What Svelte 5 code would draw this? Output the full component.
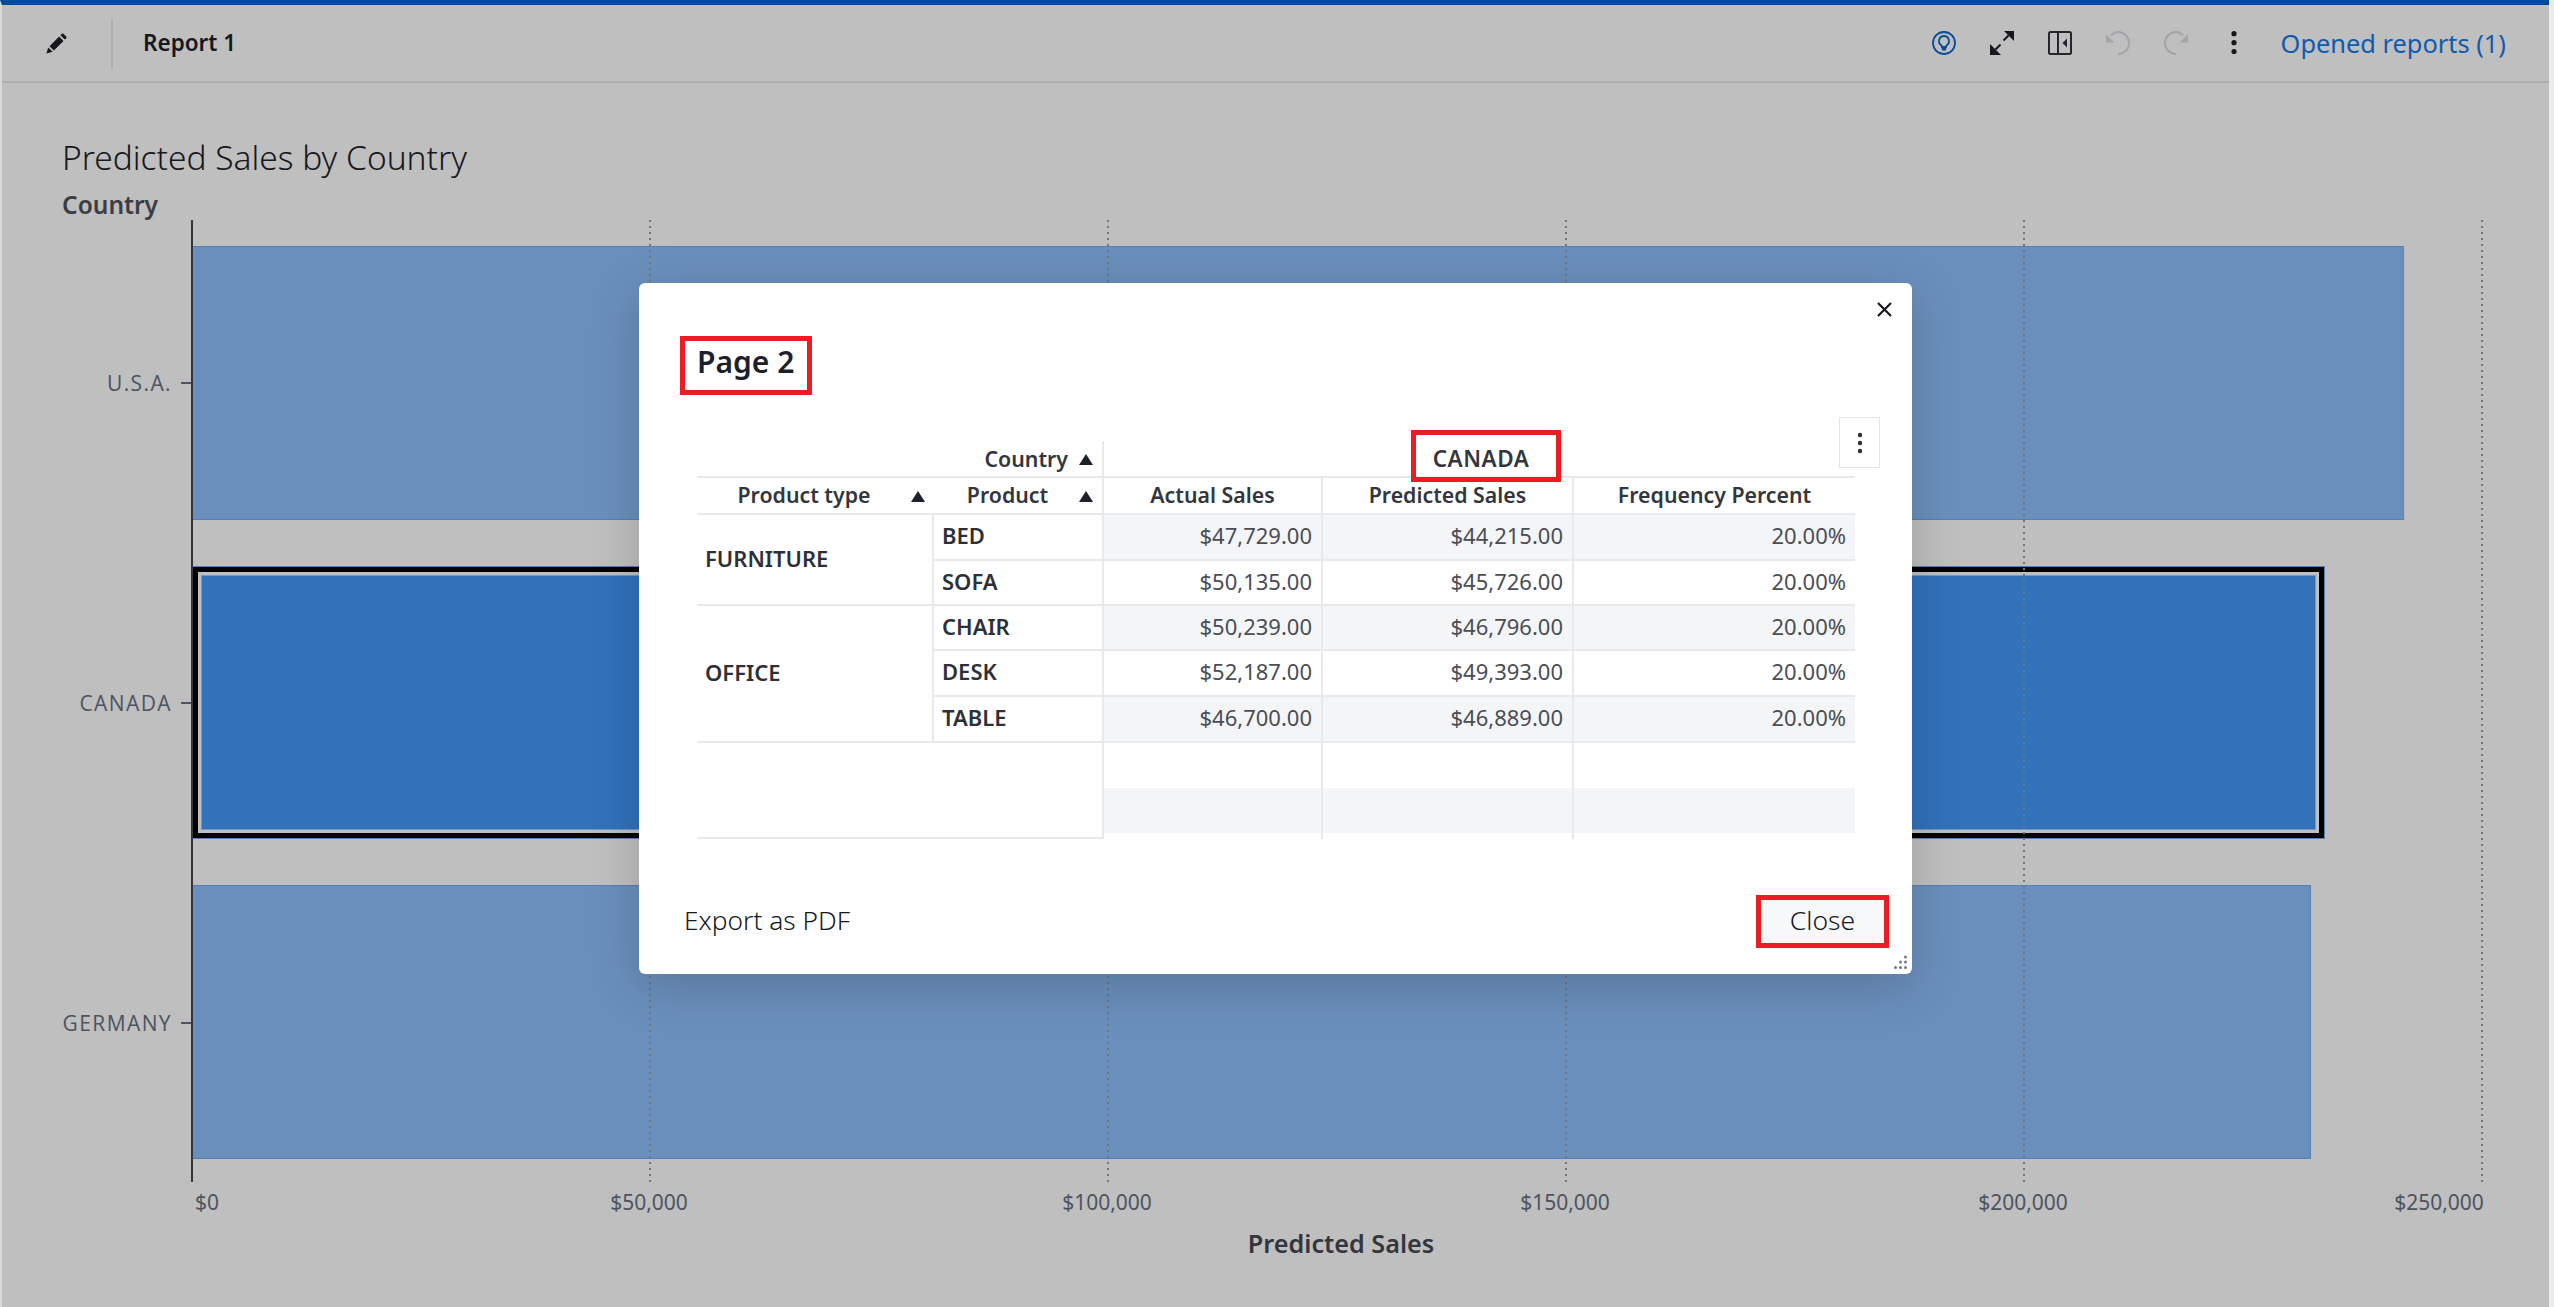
<script>
const bars = [
  { name: "U.S.A.", value: 241600 },
  { name: "CANADA", value: 233019, selected: true },
  { name: "GERMANY", value: 231440 },
];
const ticks = [0, 50000, 100000, 150000, 200000, 250000];
const pxPer = 458 / 50000;

function money(n) {
  return "$" + n.toLocaleString("en-US");
}

const groups = [
  {
    type: "FURNITURE",
    rows: [
      ["BED", "$47,729.00", "$44,215.00", "20.00%"],
      ["SOFA", "$50,135.00", "$45,726.00", "20.00%"],
    ],
  },
  {
    type: "OFFICE",
    rows: [
      ["CHAIR", "$50,239.00", "$46,796.00", "20.00%"],
      ["DESK", "$52,187.00", "$49,393.00", "20.00%"],
      ["TABLE", "$46,700.00", "$46,889.00", "20.00%"],
    ],
  },
];

function rowIndex(g, r) {
  let n = r;
  for (let i = 0; i < g; i++) n += groups[i].rows.length;
  return n;
}
</script>

<div class="shell">
  <header class="toolbar">
    <button class="edit" aria-label="Edit">
      <svg width="21" height="21" viewBox="0 0 24 24" fill="#16181d">
        <path d="M0.5 23.5l2-7 5 5z" />
        <path d="M4 15l11-11 5 5-11 11z" />
        <path d="M16.5 2.5l1.6-1.6a1.3 1.3 0 0 1 1.8 0l3.2 3.2a1.3 1.3 0 0 1 0 1.8l-1.6 1.6z" />
      </svg>
    </button>
    <div class="report-name">Report 1</div>
    <div class="actions">
      <svg class="icon" viewBox="0 0 24 24" fill="none" stroke="#0a4c98" stroke-width="1.8">
        <circle cx="12" cy="12" r="11" />
        <path d="M12 5a5 5 0 0 0-3 9c.7.6 1 1.3 1 2h4c0-.7.3-1.4 1-2a5 5 0 0 0-3-9z" />
        <rect x="9.8" y="15.2" width="4.4" height="4.3" rx="1" fill="#0a4c98" stroke="none" />
      </svg>
      <svg class="icon" viewBox="0 0 24 24" fill="#16181d">
        <path d="M24 0v10l-10-10z" />
        <path d="M0 24v-11l11 11z" />
        <path d="M18.5 4.5l-5 5M5.5 18.5l5-5" stroke="#16181d" stroke-width="2" />
      </svg>
      <svg class="icon" viewBox="0 0 24 24" fill="none" stroke="#24262c" stroke-width="2">
        <rect x="1" y="1" width="22" height="22" rx="1.5" />
        <path d="M10 1v22" />
        <path d="M14.5 12l4.5-4.5v9z" fill="#24262c" stroke="none" />
      </svg>
      <svg class="icon" viewBox="0 0 24 24" fill="none" stroke="#a2a5aa" stroke-width="2">
        <path d="M5 4.500C7 2 9.500 1 12 1a11 11 0 0 1 0 22" />
        <path d="M0 3.500v8h8.500z" fill="#a2a5aa" stroke="none" />
      </svg>
      <svg class="icon flip" viewBox="0 0 24 24" fill="none" stroke="#a2a5aa" stroke-width="2">
        <path d="M5 4.500C7 2 9.500 1 12 1a11 11 0 0 1 0 22" />
        <path d="M0 3.500v8h8.500z" fill="#a2a5aa" stroke="none" />
      </svg>
      <svg class="icon" viewBox="0 0 24 24" fill="#16181d">
        <circle cx="12" cy="2.700" r="2.600" />
        <circle cx="12" cy="11.700" r="2.600" />
        <circle cx="12" cy="20.500" r="2.600" />
      </svg>
      <span class="opened">Opened reports (1)</span>
    </div>
  </header>

  <h1 class="chart-title">Predicted Sales by Country</h1>
  <div class="axis-name">Country</div>

  <div class="chart">
    <div class="y-labels">
      {#each bars as b}
        <div class="y-label">{b.name}<i></i></div>
      {/each}
    </div>
    <div class="plot">
      {#each bars as b}
        <div class="bar" class:selected={b.selected} style="width: {b.value * pxPer - 2}px"></div>
      {/each}
      {#each ticks.slice(1) as t}
        <span class="gridline" style="left: {t * pxPer - 2}px"></span>
      {/each}
    </div>
  </div>

  <div class="x-ticks">
    {#each ticks as t}
      <span>{money(t)}</span>
    {/each}
  </div>
  <div class="x-title">Predicted Sales</div>

  <div class="modal">
    <button class="x" aria-label="Close dialog">
      <svg width="15" height="15" viewBox="0 0 15 15" stroke="#16181d" stroke-width="2.200">
        <path d="M1 1l13 13M14 1L1 14" />
      </svg>
    </button>
    <h2 class="page-title">Page 2</h2>

    <div class="table-wrap">
      <button class="more" aria-label="More">
        <svg width="6" height="22" viewBox="0 0 6 22" fill="#2d3038">
          <circle cx="3" cy="3" r="2.200" />
          <circle cx="3" cy="11" r="2.200" />
          <circle cx="3" cy="19" r="2.200" />
        </svg>
      </button>
      <table>
        <colgroup>
          <col class="c1" /><col class="c2" /><col class="c3" /><col class="c4" /><col class="c5" />
        </colgroup>
        <thead>
          <tr class="head1">
            <th colspan="2" class="country">Country <svg class="tri" viewBox="0 0 14 11"><path d="M7 0l7 11H0z" /></svg></th>
            <th colspan="3" class="canada"><span class="mark">CANADA</span></th>
          </tr>
          <tr class="head2">
            <th class="ptype">Product type <svg class="tri" viewBox="0 0 14 11"><path d="M7 0l7 11H0z" /></svg></th>
            <th class="pname edge">Product <svg class="tri" viewBox="0 0 14 11"><path d="M7 0l7 11H0z" /></svg></th>
            <th class="line">Actual Sales</th>
            <th class="line">Predicted Sales</th>
            <th>Frequency Percent</th>
          </tr>
        </thead>
        <tbody>
          {#each groups as g, gi}
            {#each g.rows as r, ri}
              <tr class="datarow" class:stripe={rowIndex(gi, ri) % 2 === 0}>
                {#if ri === 0}
                  <td class="type" rowspan={g.rows.length}>{g.type}</td>
                {/if}
                <td class="product edge">{r[0]}</td>
                <td class="num line">{r[1]}</td>
                <td class="num line">{r[2]}</td>
                <td class="num">{r[3]}</td>
              </tr>
            {/each}
          {/each}
          <tr class="filler f1">
            <td class="blank edge" colspan="2" rowspan="3"></td>
            <td class="line"></td><td class="line"></td><td></td>
          </tr>
          <tr class="filler f2 stripe">
            <td class="line"></td><td class="line"></td><td></td>
          </tr>
          <tr class="filler f3">
            <td class="line"></td><td class="line"></td><td></td>
          </tr>
        </tbody>
      </table>
    </div>

    <footer class="modal-foot">
      <span class="export">Export as PDF</span>
      <button class="close">Close</button>
    </footer>

    <svg class="grip" width="15" height="15" viewBox="0 0 15 15" fill="#6f7a88">
      <circle cx="12.500" cy="2" r="1.500" />
      <circle cx="7.500" cy="7" r="1.500" /><circle cx="12.500" cy="7" r="1.500" />
      <circle cx="2.500" cy="12.500" r="1.500" /><circle cx="7.500" cy="12.500" r="1.500" /><circle cx="12.500" cy="12.500" r="1.500" />
    </svg>
  </div>
</div>

<style>
:global(body) {
  margin: 0;
  background: #ececec;
  overflow: hidden;
  font-family: "Noto Sans", Roboto, sans-serif;
}
* {
  box-sizing: border-box;
}
.shell {
  position: relative;
  width: 2549px;
  height: 1307px;
  background: #bfbfbf;
  border-left: 2px solid #dadada;
  border-top: 5px solid #004b9e;
  color: #16181d;
}
.toolbar {
  display: flex;
  align-items: center;
  height: 78px;
  border-bottom: 2px solid #aeaeae;
}
.edit {
  width: 111px;
  height: 49px;
  background: none;
  border: none;
  border-right: 2px solid #aeaeae;
  display: flex;
  align-items: center;
  justify-content: center;
  padding: 0 22px;
}
.report-name {
  margin-left: 30px;
  font-size: 22.500px;
  font-weight: 600;
  line-height: 30px;
  color: #16181d;
}
.actions {
  margin-left: auto;
  display: flex;
  align-items: center;
  gap: 34px;
  padding-right: 43px;
}
.icon {
  width: 24px;
  height: 24px;
  display: block;
}
.flip {
  transform: scaleX(-1);
}
.opened {
  color: #0f5bae;
  font-size: 25.400px;
  margin-left: 1px;
}
.chart-title {
  margin: 54px 0 0 60px;
  font-size: 33.500px;
  line-height: 40px;
  font-weight: 300;
  color: #16181d;
}
.axis-name {
  margin: 13px 0 0 60px;
  font-size: 24.500px;
  line-height: 30px;
  font-weight: 600;
  color: #3a3d45;
}
.chart {
  display: flex;
  height: 962px;
}
.y-labels {
  width: 189px;
  padding-top: 26px;
  display: flex;
  flex-direction: column;
  gap: 46px;
}
.y-label {
  height: 274px;
  display: flex;
  align-items: center;
  justify-content: flex-end;
  font-family: "Open Sans", sans-serif;
  font-size: 21px;
  letter-spacing: 1.400px;
  color: #4d5360;
}
.y-label i {
  width: 10px;
  height: 2px;
  background: #4d5360;
  margin-left: 9px;
}
.plot {
  position: relative;
  flex: 1;
  border-left: 2px solid #33363d;
  padding-top: 26px;
  display: flex;
  flex-direction: column;
  gap: 46px;
}
.bar {
  height: 274px;
  background: #6a8fbc;
  border: 1px solid #5580b5;
  border-left: none;
}
.bar.selected {
  height: 273px;
  background: #3172bb;
  box-shadow: inset 0 0 0 5px #000, inset 0 0 0 8px #bfbfbf, inset 0 0 0 9px #6e98c9;
}
.gridline {
  position: absolute;
  top: 0;
  bottom: 0;
  width: 2px;
  background: repeating-linear-gradient(#71767f 0 2px, transparent 2px 6px);
}
.x-ticks {
  display: flex;
  margin: 5px 0 0 190px;
}
.x-ticks span {
  flex: none;
  width: 458px;
  text-align: center;
  font-size: 21px;
  line-height: 30px;
  color: #4d5360;
}
.x-ticks span:first-child {
  width: 228px;
  text-align: left;
  padding-left: 3px;
}
.x-ticks span:last-child {
  width: 140px;
  margin-left: 117px;
}
.x-title {
  margin: 11px 0 0 190px;
  width: 2298px;
  text-align: center;
  font-size: 25.200px;
  line-height: 30px;
  font-weight: 600;
  color: #33363d;
}
.modal {
  position: absolute;
  left: 637px;
  top: 278px;
  width: 1273px;
  height: 691px;
  background: #fff;
  border-radius: 6px;
  box-shadow: 0 12px 50px rgba(0, 0, 0, 0.18);
  padding-top: 53px;
}
.x {
  position: absolute;
  top: 19px;
  right: 20px;
  background: none;
  border: none;
  padding: 0;
  display: flex;
}
.page-title {
  margin: 0 0 0 41px;
  width: 132px;
  height: 59px;
  border: 5px solid #ed1c24;
  font-size: 30px;
  font-weight: 600;
  line-height: 42px;
  padding-left: 12px;
  color: #1d2029;
}
.table-wrap {
  position: relative;
  margin: 46px 0 0 58px;
}
.more {
  position: absolute;
  right: 32px;
  top: -24px;
  width: 41px;
  height: 51px;
  background: #fff;
  border: 1px solid #e3e4e6;
  display: flex;
  align-items: center;
  justify-content: center;
  padding: 0;
}
table {
  table-layout: fixed;
  width: 1158px;
  border-collapse: separate;
  border-spacing: 0;
  font-size: 22px;
}
.c1 { width: 237px; }
.c2 { width: 170px; }
.c3 { width: 219px; }
.c4 { width: 251px; }
.c5 { width: 281px; }
th {
  position: relative;
  font-size: 21.300px;
  font-weight: 600;
  color: #33363d;
  padding: 0;
  text-align: center;
}
.head1 { height: 37px; }
.head2 { height: 37px; }
.head2 th { padding-bottom: 2px; }
.head1 th,
.head2 th,
.datarow td {
  border-bottom: 2px solid #e8e9eb;
}
.country {
  text-align: right;
  padding-right: 34px;
  border-right: 2px solid #e8e9eb;
}
.canada {
  padding-left: 3px;
  font-size: 22.500px;
  letter-spacing: 0.500px;
}
.mark {
  position: relative;
}
.mark::after {
  content: "";
  position: absolute;
  left: -22px;
  right: -32px;
  top: -13px;
  bottom: -8px;
  border: 5px solid #ed1c24;
}
.ptype { padding-right: 23px; }
.pname { padding-right: 21px; }
.tri {
  position: absolute;
  right: 9px;
  top: 50%;
  margin-top: -5px;
  width: 14px;
  height: 11px;
  fill: #1d2029;
}
.edge,
.line {
  border-right: 2px solid #e8e9eb;
}
td {
  padding: 0 0 4px;
  color: #4a4d55;
}
.datarow { height: 45px; }
.datarow:nth-child(1),
.datarow:nth-child(4),
.datarow:nth-child(5) { height: 46px; }
.f1 { height: 45px; }
.f2 { height: 45px; }
.f3 { height: 6px; }
.filler td { padding: 0; }
.stripe td:not(.type):not(.product):not(.blank) {
  background: #f4f5f7;
}
.type {
  padding-left: 8px;
  font-weight: 600;
  color: #2d3038;
  border-right: 2px solid #e8e9eb;
}
.product {
  padding-left: 8px;
  font-weight: 600;
  color: #2d3038;
}
.num {
  text-align: right;
  padding-right: 9px;
}
.blank {
  border-bottom: 2px solid #e8e9eb;
}
.modal-foot {
  display: flex;
  align-items: center;
  justify-content: space-between;
  margin-top: 56px;
  padding: 0 23px 0 45px;
}
.export {
  font-size: 26.300px;
  font-weight: 300;
  color: #16181d;
  padding-bottom: 3px;
}
.close {
  width: 133px;
  height: 53px;
  border: 5px solid #ed1c24;
  background: #f7f8fa;
  font-family: inherit;
  font-size: 26.500px;
  font-weight: 300;
  color: #16181d;
  padding: 0 0 3px;
}
.grip {
  position: absolute;
  right: 4px;
  bottom: 4px;
}
</style>
